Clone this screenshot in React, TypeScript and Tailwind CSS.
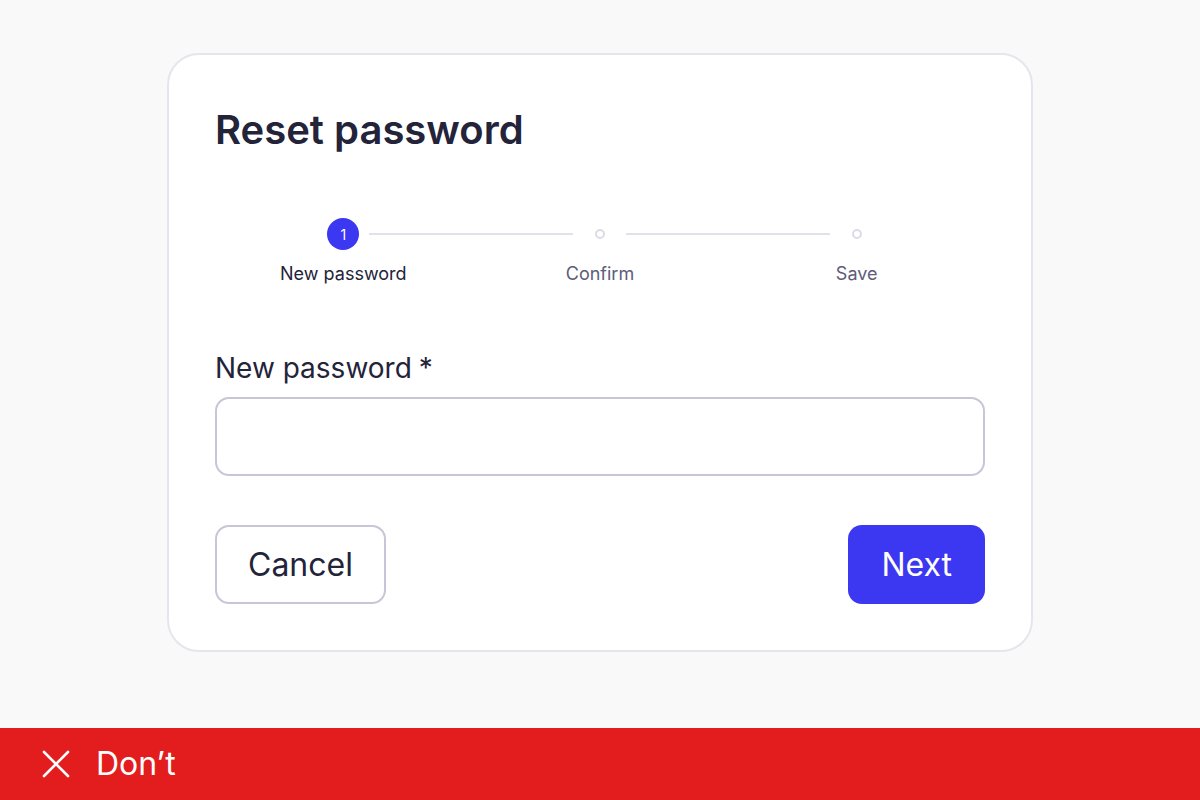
const steps = [
  { label: "New password", active: true },
  { label: "Confirm", active: false },
  { label: "Save", active: false },
];

function Stepper() {
  return (
    <div className="grid grid-cols-3">
      {steps.map((step, i) => (
        <div key={step.label} className="flex flex-col items-center">
          <div className="flex w-full items-center">
            <div className="flex-1">
              {i > 0 && <div className="mr-[11px] h-[2px] bg-[#e2e1ea]" />}
            </div>
            <div className="flex h-8 w-8 items-center justify-center">
              {step.active ? (
                <div className="flex h-8 w-8 items-center justify-center rounded-full bg-[#3c37f1] text-[14px] text-white">
                  1
                </div>
              ) : (
                <div className="h-[10px] w-[10px] rounded-full border-2 border-[#dcdbe6]" />
              )}
            </div>
            <div className="flex-1">
              {i < steps.length - 1 && <div className="ml-[10px] h-[2px] bg-[#e2e1ea]" />}
            </div>
          </div>
          <span
            className={`mt-[12px] text-[18px] leading-6 ${
              step.active ? "text-[#23233a]" : "text-[#5d5c7a]"
            }`}
          >
            {step.label}
          </span>
        </div>
      ))}
    </div>
  );
}

export default function App() {
  return (
    <div className="flex min-h-[800px] flex-col bg-[#f9f9f9] font-['Inter',sans-serif]">
      <div className="flex flex-1 justify-center">
        <div className="mt-[53px] h-fit w-[866px] rounded-[32px] border-2 border-[#e5e5ec] bg-white px-[46px] pt-[51px] pb-[46px]">
          <h1 className="text-[40px] font-semibold leading-[48px] text-[#23233a]">Reset password</h1>

          <div className="mt-[64px]">
            <Stepper />
          </div>

          <label className="mt-[64px] mb-[11px] flex items-center gap-[7px] text-[28px] leading-9 text-[#23233a]">
            New password<span>*</span>
          </label>
          <input
            type="password"
            className="block h-[79px] w-full rounded-[14px] border-[2.5px] border-[#c7c6d9] bg-white px-4 text-[26px] outline-none"
          />

          <div className="mt-[49px] flex items-center justify-between">
            <button className="h-[79px] rounded-[14px] border-[2.5px] border-[#c7c6d9] bg-white px-[31px] text-[32px] text-[#23233a]">
              Cancel
            </button>
            <button className="h-[79px] rounded-[14px] bg-[#3c37f1] px-[33px] text-[32px] text-white">
              Next
            </button>
          </div>
        </div>
      </div>

      <div className="flex h-[72px] items-center gap-[26px] bg-[#e31c1d] px-[42px] text-white">
        <svg width="28" height="28" viewBox="0 0 28 28" fill="none" stroke="currentColor" strokeWidth="2.6" strokeLinecap="round">
          <path d="M2 2L26 26M26 2L2 26" />
        </svg>
        <span className="text-[32px] leading-none">Don’t</span>
      </div>
    </div>
  );
}
